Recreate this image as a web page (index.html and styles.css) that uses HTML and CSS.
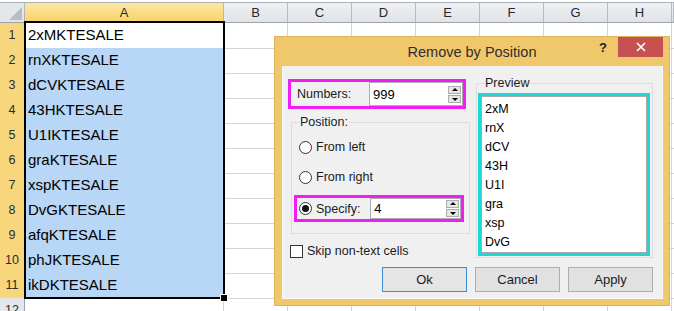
FILE: index.html
```html
<!DOCTYPE html>
<html>
  <head>
    <link rel="stylesheet" href="styles.css">
  </head>
  <body>
    <div class="sheet">
      <div class="row head">
        <div class="corner"><span class="tri"></span></div>
        <div class="colhead on">A</div>
        <div class="colhead">B</div>
        <div class="colhead">C</div>
        <div class="colhead">D</div>
        <div class="colhead">E</div>
        <div class="colhead">F</div>
        <div class="colhead">G</div>
        <div class="colhead">H</div>
        <div class="colhead"></div>
      </div>
      <div class="row"><div class="rowhead on">1</div><div class="cell a">2xMKTESALE</div><div class="cell"></div><div class="cell"></div><div class="cell"></div><div class="cell"></div><div class="cell"></div><div class="cell"></div><div class="cell"></div><div class="cell"></div></div>
      <div class="row"><div class="rowhead on">2</div><div class="cell a sel">rnXKTESALE</div><div class="cell"></div><div class="cell"></div><div class="cell"></div><div class="cell"></div><div class="cell"></div><div class="cell"></div><div class="cell"></div><div class="cell"></div></div>
      <div class="row"><div class="rowhead on">3</div><div class="cell a sel">dCVKTESALE</div><div class="cell"></div><div class="cell"></div><div class="cell"></div><div class="cell"></div><div class="cell"></div><div class="cell"></div><div class="cell"></div><div class="cell"></div></div>
      <div class="row"><div class="rowhead on">4</div><div class="cell a sel">43HKTESALE</div><div class="cell"></div><div class="cell"></div><div class="cell"></div><div class="cell"></div><div class="cell"></div><div class="cell"></div><div class="cell"></div><div class="cell"></div></div>
      <div class="row"><div class="rowhead on">5</div><div class="cell a sel">U1IKTESALE</div><div class="cell"></div><div class="cell"></div><div class="cell"></div><div class="cell"></div><div class="cell"></div><div class="cell"></div><div class="cell"></div><div class="cell"></div></div>
      <div class="row"><div class="rowhead on">6</div><div class="cell a sel">graKTESALE</div><div class="cell"></div><div class="cell"></div><div class="cell"></div><div class="cell"></div><div class="cell"></div><div class="cell"></div><div class="cell"></div><div class="cell"></div></div>
      <div class="row"><div class="rowhead on">7</div><div class="cell a sel">xspKTESALE</div><div class="cell"></div><div class="cell"></div><div class="cell"></div><div class="cell"></div><div class="cell"></div><div class="cell"></div><div class="cell"></div><div class="cell"></div></div>
      <div class="row"><div class="rowhead on">8</div><div class="cell a sel">DvGKTESALE</div><div class="cell"></div><div class="cell"></div><div class="cell"></div><div class="cell"></div><div class="cell"></div><div class="cell"></div><div class="cell"></div><div class="cell"></div></div>
      <div class="row"><div class="rowhead on">9</div><div class="cell a sel">afqKTESALE</div><div class="cell"></div><div class="cell"></div><div class="cell"></div><div class="cell"></div><div class="cell"></div><div class="cell"></div><div class="cell"></div><div class="cell"></div></div>
      <div class="row"><div class="rowhead on">10</div><div class="cell a sel">phJKTESALE</div><div class="cell"></div><div class="cell"></div><div class="cell"></div><div class="cell"></div><div class="cell"></div><div class="cell"></div><div class="cell"></div><div class="cell"></div></div>
      <div class="row"><div class="rowhead on">11</div><div class="cell a sel">ikDKTESALE</div><div class="cell"></div><div class="cell"></div><div class="cell"></div><div class="cell"></div><div class="cell"></div><div class="cell"></div><div class="cell"></div><div class="cell"></div></div>
      <div class="row"><div class="rowhead">12</div><div class="cell"></div><div class="cell"></div><div class="cell"></div><div class="cell"></div><div class="cell"></div><div class="cell"></div><div class="cell"></div><div class="cell"></div><div class="cell"></div></div>
    </div>

    <!-- selection outline and fill handle over column A -->
    <div class="selection"><span class="handle"></span></div>

    <div class="dialog">
      <div class="titlebar">
        <span></span>
        <span class="title">Remove by Position</span>
        <div class="controls">
          <span class="help">?</span>
          <span class="close">
            <svg width="10" height="10" viewBox="0 0 10 10"><path d="M1 1L9 9M9 1L1 9" stroke="#fff" stroke-width="1.6"/></svg>
          </span>
        </div>
      </div>
      <div class="content">
        <div class="top">
          <div class="leftcol">
            <div class="hilite numbers">
              <span class="lbl">Numbers:</span>
              <div class="spinbox tall">
                <span>999</span>
                <div class="spin"><span class="sbtn up"></span><span class="sbtn down"></span></div>
              </div>
            </div>
            <div class="group position">
              <span class="legend">Position:</span>
              <div class="opt"><span class="radio"></span>From left</div>
              <div class="opt"><span class="radio"></span>From right</div>
              <div class="hilite specify">
                <span class="radio checked"></span><span class="lbl2">Specify:</span>
                <div class="spinbox short">
                  <span>4</span>
                  <div class="spin"><span class="sbtn up"></span><span class="sbtn down"></span></div>
                </div>
              </div>
            </div>
            <div class="check"><span class="box"></span>Skip non-text cells</div>
          </div>
          <div class="group preview">
            <span class="legend">Preview</span>
            <div class="cyan">
              <ul class="list">
                <li>2xM</li>
                <li>rnX</li>
                <li>dCV</li>
                <li>43H</li>
                <li>U1I</li>
                <li>gra</li>
                <li>xsp</li>
                <li>DvG</li>
              </ul>
            </div>
          </div>
        </div>
        <div class="buttons">
          <span class="btn default">Ok</span>
          <span class="btn">Cancel</span>
          <span class="btn">Apply</span>
        </div>
      </div>
    </div>
  </body>
</html>
```

FILE: styles.css
```css
body {
  margin: 0;
  background: #fff;
  overflow: hidden;
}
.sheet {
  margin-top: 2px;
  font-family: "Liberation Sans", Arial, sans-serif;
}
.row {
  display: grid;
  grid-template-columns: 25px 199px repeat(7, 64px) 1fr;
  height: 25px;
}
.row.head {
  height: 21px;
}
.corner {
  position: relative;
  background: #e3e6ea;
  border-top: 1px solid #a9aeb4;
  border-right: 1px solid #b1b5ba;
  border-bottom: 1px solid #9ea3a9;
  box-sizing: border-box;
}
.tri {
  position: absolute;
  right: 2px;
  bottom: 2px;
  width: 0;
  height: 0;
  border-left: 13px solid transparent;
  border-bottom: 13px solid #b9bdc2;
}
.colhead {
  background: linear-gradient(#eef0f3, #e0e3e7);
  border-top: 1px solid #a9aeb4;
  border-right: 1px solid #b6bbc1;
  border-bottom: 1px solid #9ea3a9;
  box-sizing: border-box;
  font-size: 13px;
  color: #27292c;
  text-align: center;
  line-height: 19px;
}
.colhead.on {
  background: linear-gradient(#fde7a2, #f8d26a);
  border-bottom: 1px solid #e2a53b;
  border-right: 1px solid #e2b35a;
}
.rowhead {
  background: #e3e6ea;
  border-right: 1px solid #9ea3a9;
  border-bottom: 1px solid #c5c9ce;
  box-sizing: border-box;
  font-size: 12.5px;
  color: #2b2b2b;
  text-align: center;
  line-height: 25px;
}
.rowhead.on {
  background: #f8d77c;
  border-right: 1px solid #e2a53b;
  border-bottom: 1px solid #e9c066;
}
.cell {
  border-right: 1px solid #d4d4d4;
  border-bottom: 1px solid #d4d4d4;
  box-sizing: border-box;
  font-size: 15px;
  color: #000;
  line-height: 24px;
  padding-left: 3px;
  white-space: nowrap;
}
.cell.sel {
  background: #b8d6f5;
  border-bottom-color: #dae6f2;
}

.selection {
  position: absolute;
  left: 24px;
  top: 21px;
  width: 201px;
  height: 278px;
  border: 2px solid #000;
  box-sizing: border-box;
}
.handle {
  position: absolute;
  right: -5px;
  bottom: -5px;
  width: 6px;
  height: 6px;
  background: #000;
  border: 1px solid #fff;
}

.dialog {
  position: absolute;
  left: 274px;
  top: 36px;
  width: 396px;
  height: 270px;
  background: #f0c86c;
  border: 1px solid #dcb25a;
  box-sizing: border-box;
  font-family: "Liberation Sans", Arial, sans-serif;
  font-size: 12.5px;
  color: #1b1b22;
}
.titlebar {
  height: 29px;
  display: grid;
  grid-template-columns: 1fr auto 1fr;
  align-items: center;
}
.title {
  font-size: 14.5px;
  color: #2e2e2e;
  padding-top: 1px;
}
.controls {
  justify-self: end;
  align-self: start;
  display: flex;
  align-items: center;
  margin-right: 6px;
}
.help {
  font-weight: bold;
  font-size: 13px;
  color: #222;
  margin-right: 11px;
}
.close {
  width: 45px;
  height: 20px;
  background: #c75050;
  display: flex;
  align-items: center;
  justify-content: center;
}
.content {
  height: 233px;
  margin: 0 6px 0 7px;
  background: #f0f0f0;
  box-sizing: border-box;
  padding: 0 9px 0 5px;
  border: 1px solid #f8f8f8;
  border-top: 0;
}
.top {
  display: flex;
  align-items: flex-start;
}
.leftcol {
  width: 188px;
  flex: none;
}
.hilite {
  border: 3px solid #f01ef0;
  box-sizing: border-box;
  display: flex;
  align-items: center;
}
.numbers {
  margin-top: 13px;
  width: 178px;
  height: 30px;
  padding-left: 6px;
}
.lbl {
  width: 72px;
}
.spinbox {
  background: #fff;
  border: 1px solid #abadb3;
  box-sizing: border-box;
  display: flex;
  align-items: center;
  padding-left: 3px;
  font-size: 13px;
  color: #000;
}
.spinbox.tall {
  width: 94px;
  height: 24px;
}
.spinbox.short {
  width: 92px;
  height: 21px;
}
.spin {
  margin-left: auto;
  margin-right: 1px;
  display: flex;
  flex-direction: column;
  gap: 1px;
}
.sbtn {
  width: 13px;
  height: 8px;
  background: #e6e6e6;
  border: 1px solid #acacac;
  box-sizing: border-box;
  position: relative;
}
.sbtn::after {
  content: '';
  position: absolute;
  left: 3px;
  width: 0;
  height: 0;
  border-left: 3px solid transparent;
  border-right: 3px solid transparent;
}
.sbtn.up::after {
  top: 1px;
  border-bottom: 3px solid #000;
}
.sbtn.down::after {
  top: 2px;
  border-top: 3px solid #000;
}
.group {
  position: relative;
  border: 1px solid #dcdcdc;
  box-sizing: border-box;
}
.legend {
  position: absolute;
  top: -8px;
  left: 7px;
  padding: 0 1px;
  background: #f0f0f0;
  line-height: 14px;
}
.position {
  margin: 13px 0 0 3px;
  width: 179px;
  height: 112px;
  padding-top: 9px;
}
.opt {
  height: 30px;
  display: flex;
  align-items: center;
  padding-left: 7px;
}
.radio {
  width: 13px;
  height: 13px;
  border: 1px solid #333;
  border-radius: 50%;
  background: #fff;
  box-sizing: border-box;
  margin-right: 4px;
  display: inline-flex;
  align-items: center;
  justify-content: center;
  flex: none;
}
.radio.checked::after {
  content: '';
  width: 7px;
  height: 7px;
  border-radius: 50%;
  background: #111;
}
.specify {
  margin: 3px 0 0 2px;
  width: 170px;
  height: 27px;
  padding-left: 2px;
}
.lbl2 {
  width: 55px;
}
.check {
  margin: 10px 0 0 2px;
  display: flex;
  align-items: center;
}
.box {
  width: 13px;
  height: 13px;
  border: 1px solid #333;
  background: #fff;
  box-sizing: border-box;
  margin-right: 4px;
}
.preview {
  margin-top: 17px;
  width: 178px;
  height: 175px;
  padding: 9px 2px 1px 1px;
}
.cyan {
  height: 163px;
  border: 3px solid #1ed8d8;
  box-sizing: border-box;
}
.list {
  margin: 0;
  height: 100%;
  box-sizing: border-box;
  border: 1px solid #a8a8a8;
  background: #fff;
  list-style: none;
  padding: 3px 0 0 3px;
}
.list li {
  line-height: 19px;
  color: #000;
}
.buttons {
  margin-top: 9px;
  display: flex;
  justify-content: flex-end;
  gap: 8px;
}
.btn {
  width: 85px;
  height: 25px;
  background: #e1e1e1;
  border: 1px solid #adadad;
  box-sizing: border-box;
  display: flex;
  align-items: center;
  justify-content: center;
  font-size: 13px;
}
.btn.default {
  border-color: #3c8ad8;
  background: #e5e5e5;
}
```
